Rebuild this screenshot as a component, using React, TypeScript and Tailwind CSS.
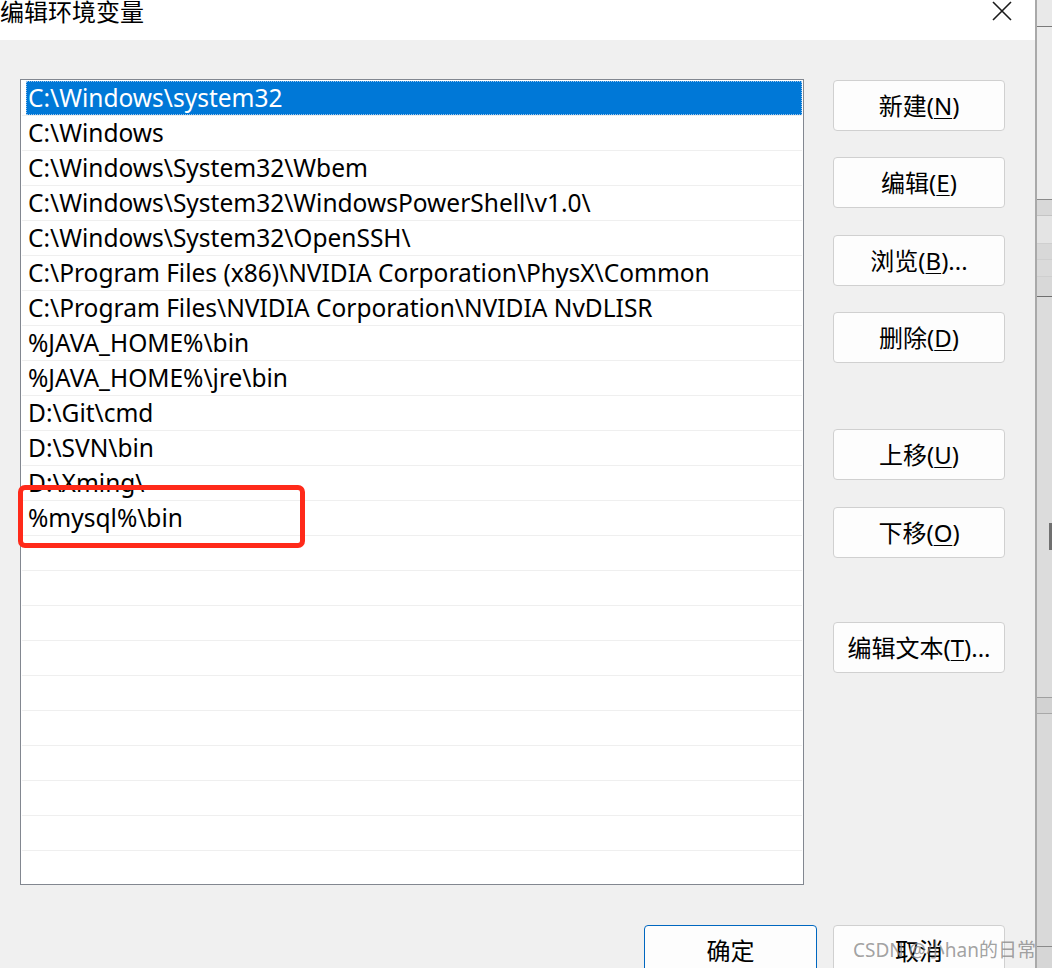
import React from "react";

const paths = [
  "C:\\Windows\\system32",
  "C:\\Windows",
  "C:\\Windows\\System32\\Wbem",
  "C:\\Windows\\System32\\WindowsPowerShell\\v1.0\\",
  "C:\\Windows\\System32\\OpenSSH\\",
  "C:\\Program Files (x86)\\NVIDIA Corporation\\PhysX\\Common",
  "C:\\Program Files\\NVIDIA Corporation\\NVIDIA NvDLISR",
  "%JAVA_HOME%\\bin",
  "%JAVA_HOME%\\jre\\bin",
  "D:\\Git\\cmd",
  "D:\\SVN\\bin",
  "D:\\Xming\\",
  "%mysql%\\bin",
];

const rows = [...paths, ...Array(10).fill("")];

const SideButton = ({
  label,
  hotkey,
  tail = "",
  className = "",
}: {
  label: string;
  hotkey: string;
  tail?: string;
  className?: string;
}) => (
  <div
    className={`h-[51px] w-[172px] shrink-0 rounded-[4px] border border-[#d0d0d0] bg-[#fdfdfd] flex items-center justify-center text-[24px] text-black ${className}`}
  >
    {label}(<span className="underline underline-offset-[3px] decoration-1">{hotkey}</span>){tail}
  </div>
);

const BackgroundStrip = () => (
  <div className="flex-1 flex flex-col border-l-2 border-[#a9a9a9] bg-[#e2e2e2]">
    <div className="h-[27px] shrink-0 bg-[#e9e9e9] border-b border-[#7a7a7a]" />
    <div className="h-[173px] shrink-0 bg-[#ececec] border-b border-[#8a8a8a]" />
    <div className="h-[16px] shrink-0 bg-[#d8d8d8] border-b border-[#c4c4c4]" />
    <div className="h-[28px] shrink-0 bg-[#e4e4e4] border-b border-[#cfcfcf]" />
    <div className="h-[16px] shrink-0 bg-[#d8d8d8] border-b border-[#cfcfcf]" />
    <div className="h-[17px] shrink-0 bg-[#dadada] border-b border-[#cfcfcf]" />
    <div className="h-[20px] shrink-0 bg-[#d8d8d8] border-b border-[#6f6f6f]" />
    <div className="h-[401px] shrink-0 bg-[#dcdcdc] border-b border-[#a0a0a0] flex flex-col items-end">
      <div className="mt-[226px] h-[27px] w-[3px] bg-[#707070]" />
    </div>
    <div className="h-[16px] shrink-0 bg-[#d2d2d2] border-b border-[#a8a8a8]" />
    <div className="h-[233px] shrink-0 bg-[#d9d9d9] border-b border-[#8a8a8a]" />
    <div className="flex-1 bg-[#d6d6d6]" />
  </div>
);

export default function App() {
  return (
    <div className="relative w-[1052px] h-[968px] overflow-hidden flex bg-[#f0f0f0] font-['Noto_Sans','Noto_Sans_CJK_SC',sans-serif]">
      <div className="w-[1035px] flex flex-col">
        {/* title bar */}
        <div className="h-10 shrink-0 bg-white flex justify-between">
          <div className="text-[24px] leading-[24px] text-black font-['Noto_Sans_CJK_SC',sans-serif] -mt-[1px]">
            编辑环境变量
          </div>
          <svg width="22" height="22" viewBox="0 0 22 22" className="mr-[22px]">
            <path d="M2 2L20 20M20 2L2 20" stroke="#1a1a1a" strokeWidth="1.6" />
          </svg>
        </div>

        {/* body */}
        <div className="flex-1 flex flex-col pl-5 pt-[39px]">
          <div className="flex shrink-0">
            <div className="w-[784px] h-[806px] border border-[#828790] bg-white p-[1px] overflow-hidden">
              {rows.map((text, i) => (
                <div key={i} className="h-[35px] border-b border-[#efefef] flex">
                  {i === 0 ? (
                    <div className="ml-[4px] flex-1 bg-[#0078d7] border border-dotted border-[#9cc4ec] flex items-center pl-[1px] text-white text-[24.5px] whitespace-nowrap">
                      {text}
                    </div>
                  ) : (
                    <div className="flex-1 flex items-center pl-[6px] text-black text-[24.5px] whitespace-nowrap">
                      {text}
                    </div>
                  )}
                </div>
              ))}
            </div>

            <div className="ml-[29px] pt-[1px] flex flex-col">
              <SideButton label="新建" hotkey="N" />
              <SideButton label="编辑" hotkey="E" className="mt-[26px]" />
              <SideButton label="浏览" hotkey="B" tail="..." className="mt-[27px]" />
              <SideButton label="删除" hotkey="D" className="mt-[26px]" />
              <SideButton label="上移" hotkey="U" className="mt-[66px]" />
              <SideButton label="下移" hotkey="O" className="mt-[27px]" />
              <SideButton label="编辑文本" hotkey="T" tail="..." className="mt-[64px]" />
            </div>
          </div>

          <div className="mt-[40px] ml-[624px] flex gap-4 shrink-0">
            <div className="h-[51px] w-[173px] rounded-[4px] border border-[#0067c0] bg-[#fdfdfd] flex items-center justify-center text-[24px] text-black">
              确定
            </div>
            <div className="h-[51px] w-[172px] rounded-[4px] border border-[#d0d0d0] bg-[#fdfdfd] flex items-center justify-center text-[24px] text-black">
              取消
            </div>
          </div>
        </div>
      </div>

      <BackgroundStrip />

      {/* red annotation */}
      <div className="absolute left-[18px] top-[485px] w-[287px] h-[63px] border-[5px] border-[#ff2a1a] rounded-[7px]" />

      {/* watermark */}
      <div className="absolute left-[853px] top-[936px] text-[19px] leading-[28px] text-[#8a8a8a]/80 whitespace-nowrap">
        CSDN @小han的日常
      </div>
    </div>
  );
}
